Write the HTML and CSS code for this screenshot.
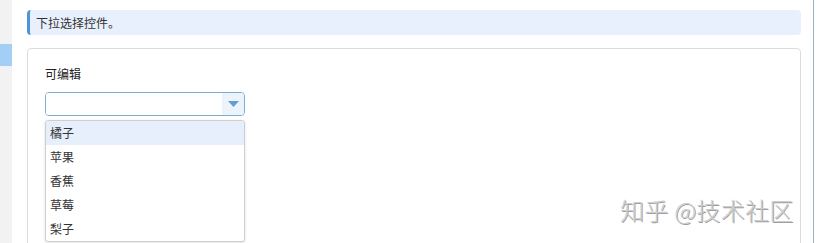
FILE: index.html
```html
<!DOCTYPE html>
<html lang="zh">
<head>
<meta charset="utf-8">
<title>下拉选择控件</title>
<link rel="stylesheet" href="styles.css">
</head>
<body>
<div class="app">
  <aside class="sidebar"><div class="side-active"></div></aside>
  <main class="main">
    <div class="tip">下拉选择控件。</div>
    <section class="card">
      <div class="label">可编辑</div>
      <div class="combo">
        <input class="combo-input" type="text">
        <span class="combo-arrow"><svg width="11" height="6" viewBox="0 0 11 6"><path d="M0 0H11L5.5 6Z" fill="#5f9fd8"/></svg></span>
      </div>
      <ul class="dropdown">
        <li class="item item-active">橘子</li>
        <li class="item">苹果</li>
        <li class="item">香蕉</li>
        <li class="item">草莓</li>
        <li class="item">梨子</li>
      </ul>
    </section>
  </main>
  <div class="edge"></div>
  <div class="watermark">知乎 @技术社区</div>
</div>
</body>
</html>
```
FILE: styles.css
```css
html, body {
  margin: 0;
  padding: 0;
  background: #fff;
}
body {
  font-family: "Noto Sans CJK SC", "Noto Sans", sans-serif;
  font-size: 12px;
  color: #333;
}
.app {
  position: relative;
  display: flex;
  height: 243px;
  overflow: hidden;
}
.sidebar {
  width: 12px;
  flex: none;
  background: #f2f2f2;
  padding-top: 44px;
  box-sizing: border-box;
}
.side-active {
  height: 22px;
  background: #a3cef6;
}
.main {
  flex: 1;
  padding: 10px 12px 0 15px;
  min-width: 0;
}
.tip {
  height: 25px;
  line-height: 25px;
  background: #e9f0fd;
  border-left: 3px solid #4b93db;
  border-radius: 4px;
  padding-left: 6px;
  color: #333;
}
.card {
  margin-top: 13px;
  border: 1px solid #dcdcdc;
  border-radius: 4px;
  padding: 17px 17px 0;
  height: 240px;
}
.label {
  line-height: 16px;
  height: 16px;
  margin-bottom: 10px;
  color: #222;
}
.combo {
  display: flex;
  width: 200px;
  height: 24px;
  box-sizing: border-box;
  border: 1px solid #7badcf;
  border-radius: 4px;
  overflow: hidden;
}
.combo-input {
  flex: 1;
  border: 0;
  outline: 0;
  padding: 0 4px;
  min-width: 0;
  font: inherit;
  background: #fff;
}
.combo-arrow {
  width: 22px;
  flex: none;
  display: flex;
  align-items: center;
  justify-content: center;
  background: #edf3fb;
}
.dropdown {
  list-style: none;
  margin: 4px 0 0;
  padding: 0;
  width: 200px;
  box-sizing: border-box;
  border: 1px solid #cfcfcf;
  border-radius: 3px;
  box-shadow: 0 1px 3px rgba(0,0,0,0.12);
  overflow: hidden;
  background: #fff;
}
.item {
  height: 24px;
  line-height: 24px;
  padding-left: 4px;
  color: #333;
}
.item-active {
  background: #e7eefc;
}
.edge {
  width: 4px;
  flex: none;
  border-left: 1px solid #93b3c8;
  box-sizing: border-box;
  background: #fff;
}
.watermark {
  position: absolute;
  left: 620px;
  top: 195px;
  font-size: 24px;
  font-weight: 300;
  line-height: 30px;
  letter-spacing: 0.3px;
  color: #cdcdcd;
  text-shadow: 1px 1px 0 #a0a0a0, -1px -1px 0 #fff;
}
```
